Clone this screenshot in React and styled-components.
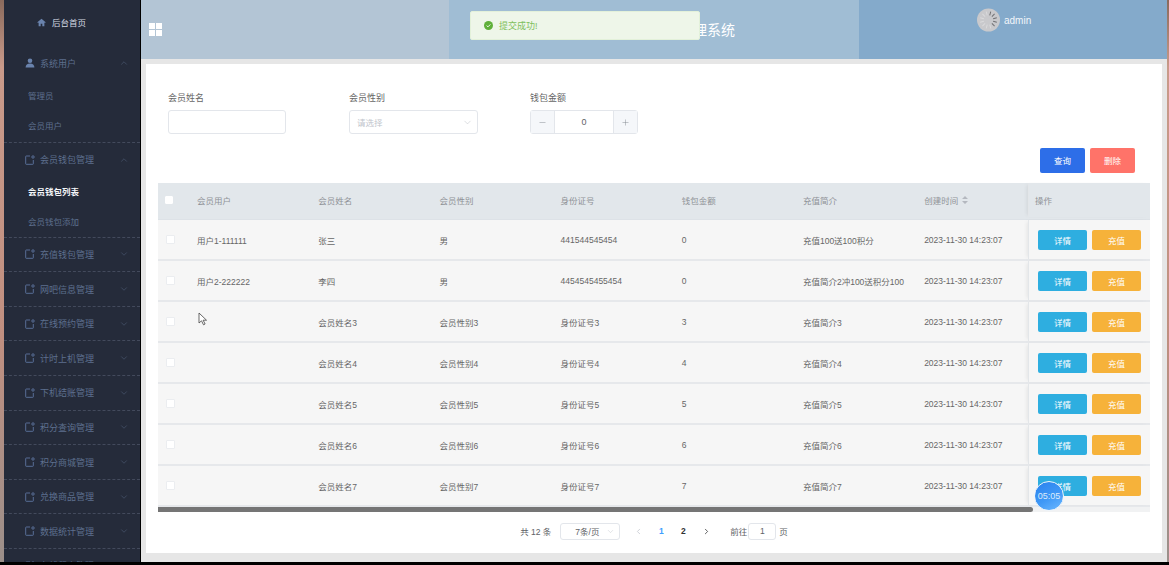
import React from "react";
import styled, { createGlobalStyle } from "styled-components";
import { ChevronUp, ChevronDown, ChevronLeft, ChevronRight, Plus, Minus } from "lucide-react";

const GlobalStyle = createGlobalStyle`
  html, body {
    margin: 0;
    padding: 0;
    width: 1169px;
    height: 565px;
    overflow: hidden;
    background: #000;
    font-family: "Liberation Sans", "Noto Sans CJK SC", sans-serif;
  }
  * { box-sizing: border-box; }
`;

const Screen = styled.div`
  position: relative;
  width: 1169px;
  height: 565px;
  display: flex;
  flex-direction: column;
  overflow: hidden;
  background: #000;
`;

const Desktop = styled.div`
  height: 562px;
  display: flex;
`;

const Edge = styled.div`
  flex: none;
  width: ${(p) => p.$width}px;
  background: linear-gradient(180deg, #8a6a5c 0%, #c99a8a 12%, #c08f80 60%, #9b8f8a 100%);
`;

/* sidebar */
const Sidebar = styled.aside`
  flex: none;
  width: 136px;
  overflow: hidden;
  background: #252b3a;
  color: #5d6f8e;
`;

const HomeRow = styled.div`
  height: 46px;
  display: flex;
  align-items: center;
  gap: 6px;
  padding: 0 0 2px 33px;
  color: #d5dbe5;
  font-size: 8.5px;
`;

const Group = styled.div`
  border-bottom: 1px dashed #434a5c;
`;

const GroupTitle = styled.div`
  height: ${(p) => p.$height || 34.6}px;
  display: flex;
  align-items: center;
  padding-left: 21px;
  font-size: 9px;
`;

const GroupLabel = styled.span`
  flex: 1;
  margin-left: 5px;
`;

const GroupArrow = styled.span`
  display: flex;
  width: 10px;
  margin-right: 11px;
  color: #566683;
`;

const SubItem = styled.div`
  height: ${(p) => p.$height || 30.5}px;
  display: flex;
  align-items: center;
  padding: 0 0 2px 24px;
  font-size: 8.5px;
  color: ${(p) => (p.$active ? "#f4f6f9" : "#5d6f8e")};
  font-weight: ${(p) => (p.$active ? 700 : 400)};
`;

/* right part */
const Content = styled.div`
  flex: 1;
  min-width: 0;
  display: flex;
  flex-direction: column;
  margin-left: 1px;
  background: #e6e6e6;
`;

const TopBar = styled.header`
  flex: none;
  height: 59px;
  display: flex;
`;

const MenuSegment = styled.div`
  flex: none;
  width: 308px;
  display: flex;
  align-items: center;
  padding-left: 8px;
  background: #b3c5d5;
`;

const GridIcon = styled.div`
  display: grid;
  grid-template-columns: 6px 6px;
  grid-auto-rows: 6px;
  gap: 1px;
`;

const GridCell = styled.span`
  background: #fff;
`;

const TitleSegment = styled.div`
  flex: none;
  width: 410px;
  display: flex;
  align-items: center;
  justify-content: center;
  padding: 0 6px 2px 0;
  background: #a0bdd4;
  color: #fff;
  font-size: 14px;
`;

const UserSegment = styled.div`
  flex: 1;
  display: flex;
  align-items: flex-start;
  gap: 4px;
  padding: 8px 0 0 118px;
  background: #84aacb;
`;

const UserName = styled.span`
  margin-top: 7px;
  color: #f2f6fa;
  font-size: 10px;
`;

const Panel = styled.main`
  height: 489px;
  margin: 5px 5px 0;
  padding: 28px 12px 0;
  background: #fff;
`;

const FilterForm = styled.div`
  display: flex;
  padding-left: 10px;
`;

const Field = styled.div`
  width: ${(p) => p.$width}px;
  flex: none;
  display: flex;
  flex-direction: column;
  gap: 6px;
`;

const FieldLabel = styled.label`
  height: 12px;
  line-height: 12px;
  font-size: 9px;
  color: #666;
`;

const Box = styled.div`
  height: 24px;
  display: flex;
  align-items: center;
  border: 1px solid #e3e6eb;
  border-radius: 3px;
  background: #fff;
  width: ${(p) => p.$width}px;
`;

const Placeholder = styled.span`
  flex: 1;
  padding: 0 0 1px 7px;
  font-size: 8.5px;
  color: #c0c4cc;
`;

const SelectArrow = styled.span`
  display: flex;
  margin-right: 4px;
  color: #b4b8c0;
`;

const StepButton = styled.span`
  flex: none;
  width: 24px;
  height: 100%;
  display: flex;
  align-items: center;
  justify-content: center;
  background: #f5f7fa;
  color: #7d828a;
  border-${(p) => p.$side}: 1px solid #e3e6eb;
`;

const StepValue = styled.span`
  flex: 1;
  text-align: center;
  font-size: 9px;
  color: #606266;
`;

const ActionRow = styled.div`
  display: flex;
  justify-content: flex-end;
  gap: 5px;
  margin-top: 14px;
  padding-right: 15px;
`;

const ActionButton = styled.button`
  width: 45px;
  height: 25px;
  padding: 0 0 1px;
  border: 0;
  border-radius: 2px;
  background: ${(p) => p.$color};
  color: #fff;
  font: inherit;
  font-size: 8.5px;
`;

/* table */
const Table = styled.div`
  margin-top: 10px;
`;

const Row = styled.div`
  display: grid;
  grid-template-columns: 29px repeat(6, 121.2px) 113.8px 122px;
  align-items: center;
  height: ${(p) => (p.$head ? 37 : 41)}px;
  padding-bottom: ${(p) => (p.$head ? 2 : 0)}px;
  background: ${(p) => (p.$head ? "#e2e7eb" : "#f6f6f6")};
  border-bottom: ${(p) => (p.$head ? "1px solid #dde2e7" : "2px solid #e6e8eb")};
`;

const Cell = styled.div`
  padding-left: 10px;
  font-size: 8.5px;
  color: ${(p) => (p.$head ? "#8f9297" : "#666")};
  white-space: nowrap;
  display: flex;
  align-items: center;
  gap: 4px;
`;

const CheckCell = styled.div`
  padding-left: ${(p) => (p.$head ? 7 : 8)}px;
  display: flex;
`;

const Check = styled.span`
  width: ${(p) => (p.$head ? 8 : 9)}px;
  height: ${(p) => (p.$head ? 8 : 9)}px;
  background: #fff;
  border: 1px solid ${(p) => (p.$head ? "#fff" : "#ebedf0")};
  border-radius: 1px;
`;

const FixedCell = styled.div`
  height: 100%;
  display: flex;
  align-items: center;
  gap: 5px;
  padding-left: ${(p) => (p.$head ? 6 : 9)}px;
  border-left: 1px solid #e3e6e9;
  box-shadow: -3px 0 4px -2px rgba(0, 0, 0, 0.08);
  font-size: 8.5px;
  color: #8f9297;
`;

const RowButton = styled.button`
  width: 49px;
  height: 20px;
  padding: 0;
  border: 0;
  border-radius: 2px;
  background: ${(p) => p.$color};
  color: #fff;
  font: inherit;
  font-size: 8.5px;
`;

const ScrollTrack = styled.div`
  height: 5px;
  background: #f1f2f3;
`;

const ScrollThumb = styled.div`
  width: 875px;
  height: 100%;
  border-radius: 0 3px 3px 0;
  background: #757575;
`;

const Pager = styled.div`
  display: flex;
  align-items: center;
  justify-content: center;
  height: 18px;
  margin-top: 10px;
  font-size: 8.5px;
  color: #606266;
`;

const PagerSelect = styled.div`
  width: 60px;
  height: 17px;
  margin-left: 9px;
  display: flex;
  align-items: center;
  border: 1px solid #e3e6eb;
  border-radius: 3px;
`;

const PagerSelectText = styled.span`
  flex: 1;
  padding-left: 14px;
`;

const PagerArrow = styled.span`
  display: flex;
  justify-content: center;
  width: 12px;
  margin: ${(p) => p.$margin};
  color: ${(p) => (p.$muted ? "#c0c4cc" : "#303133")};
`;

const PageNumber = styled.span`
  width: 22px;
  text-align: center;
  font-weight: 700;
  color: ${(p) => (p.$active ? "#409eff" : "#303133")};
`;

const PagerInput = styled.span`
  width: 28px;
  height: 17px;
  margin: 0 3px 0 1px;
  display: flex;
  align-items: center;
  justify-content: center;
  border: 1px solid #e3e6eb;
  border-radius: 3px;
`;

/* overlays */
const Toast = styled.div`
  position: absolute;
  left: 470px;
  top: 11px;
  width: 230px;
  height: 29px;
  display: flex;
  align-items: center;
  gap: 6px;
  padding-left: 13px;
  background: #eef6e9;
  border: 1px solid #e3f1da;
  border-radius: 2px;
  color: #7ec05c;
  font-size: 9px;
`;

const Timer = styled.div`
  position: absolute;
  left: 1034px;
  top: 481px;
  width: 30px;
  height: 30px;
  display: flex;
  align-items: center;
  justify-content: center;
  border: 1.5px solid #eef5fb;
  border-radius: 50%;
  background: linear-gradient(150deg, #2a82ee 0%, #3f98f6 55%, #6db9ff 100%);
  color: #dcebfb;
  font-size: 9px;
`;

const Cursor = styled.svg`
  position: absolute;
  left: 198px;
  top: 312px;
`;

const NoteIcon = () => (
  <svg width="10" height="10" viewBox="0 0 10 10" fill="none" stroke="#5d75a0" strokeWidth="0.9">
    <path d="M5 1H1.2a.5.5 0 0 0-.5.5v7.3a.5.5 0 0 0 .5.5h6.6a.5.5 0 0 0 .5-.5V5" />
    <circle cx="8" cy="2" r="1.2" />
  </svg>
);

const UserIcon = () => (
  <svg width="10" height="10" viewBox="0 0 10 10" fill="#6a83ad">
    <circle cx="5" cy="2.8" r="2.3" />
    <path d="M0.6 9.6c0-2.6 1.8-4 4.4-4s4.4 1.4 4.4 4z" />
  </svg>
);

const HomeIcon = () => (
  <svg width="9" height="9" viewBox="0 0 10 10" fill="#6a83ad">
    <path d="M5 .8 .4 4.8l.6.7.8-.6v4.3h2.3V6.4h1.8v2.8h2.300V4.900l.8.6.6-.7z" />
  </svg>
);

const SuccessIcon = () => (
  <svg width="9" height="9" viewBox="0 0 10 10">
    <circle cx="5" cy="5" r="5" fill="#5fb03a" />
    <path d="M2.900 5.100 4.400 6.500 7.100 3.800" fill="none" stroke="#fff" strokeWidth="1" />
  </svg>
);

const SortIcon = () => (
  <svg width="6" height="8" viewBox="0 0 6 8" fill="#b4b8bf">
    <path d="M3 0 6 3H0zM3 8 0 5h6z" />
  </svg>
);

const Spinner = () => (
  <svg width="23" height="24" viewBox="0 0 24 24">
    <circle cx="12" cy="12" r="12" fill="#c9c9cc" />
    {Array.from({ length: 12 }).map((_, i) => (
      <line
        key={i}
        x1="12"
        y1="3"
        x2="12"
        y2="7"
        stroke={i < 5 ? "#6f6f72" : "#dadadc"}
        strokeWidth="1"
        transform={`rotate(${i * 30 + 15} 12 12)`}
      />
    ))}
  </svg>
);

const foldedMenus = [
  "充值钱包管理",
  "网吧信息管理",
  "在线预约管理",
  "计时上机管理",
  "下机结账管理",
  "积分查询管理",
  "积分商城管理",
  "兑换商品管理",
  "数据统计管理",
  "在线留言管理",
];

const columns = ["会员用户", "会员姓名", "会员性别", "身份证号", "钱包金额", "充值简介"];

const date = "2023-11-30 14:23:07";

const rows = [
  ["用户1-111111", "张三", "男", "441544545454", "0", "充值100送100积分"],
  ["用户2-222222", "李四", "男", "4454545455454", "0", "充值简介2冲100送积分100"],
  ...[3, 4, 5, 6, 7].map((n) => ["", `会员姓名${n}`, `会员性别${n}`, `身份证号${n}`, `${n}`, `充值简介${n}`]),
];

export default function App() {
  return (
    <Screen>
      <GlobalStyle />
      <Desktop>
        <Edge $width={4} />
        <Sidebar>
          <HomeRow>
            <HomeIcon />
            后台首页
          </HomeRow>
          <Group>
            <GroupTitle>
              <UserIcon />
              <GroupLabel>系统用户</GroupLabel>
              <GroupArrow><ChevronUp size={10} strokeWidth={1.2} /></GroupArrow>
            </GroupTitle>
            <SubItem>管理员</SubItem>
            <SubItem>会员用户</SubItem>
          </Group>
          <Group>
            <GroupTitle>
              <NoteIcon />
              <GroupLabel>会员钱包管理</GroupLabel>
              <GroupArrow><ChevronUp size={10} strokeWidth={1.2} /></GroupArrow>
            </GroupTitle>
            <SubItem $active>会员钱包列表</SubItem>
            <SubItem $height={29}>会员钱包添加</SubItem>
          </Group>
          {foldedMenus.map((name) => (
            <Group key={name}>
              <GroupTitle $height={33.6}>
                <NoteIcon />
                <GroupLabel>{name}</GroupLabel>
                <GroupArrow><ChevronDown size={10} strokeWidth={1.2} /></GroupArrow>
              </GroupTitle>
            </Group>
          ))}
        </Sidebar>
        <Content>
          <TopBar>
            <MenuSegment>
              <GridIcon>
                <GridCell />
                <GridCell />
                <GridCell />
                <GridCell />
              </GridIcon>
            </MenuSegment>
            <TitleSegment>网吧会员钱包充值管理系统</TitleSegment>
            <UserSegment>
              <Spinner />
              <UserName>admin</UserName>
            </UserSegment>
          </TopBar>
          <Panel>
            <FilterForm>
              <Field $width={181}>
                <FieldLabel>会员姓名</FieldLabel>
                <Box $width={118} />
              </Field>
              <Field $width={181}>
                <FieldLabel>会员性别</FieldLabel>
                <Box $width={129}>
                  <Placeholder>请选择</Placeholder>
                  <SelectArrow><ChevronDown size={11} strokeWidth={1} /></SelectArrow>
                </Box>
              </Field>
              <Field $width={108}>
                <FieldLabel>钱包金额</FieldLabel>
                <Box $width={108}>
                  <StepButton $side="right"><Minus size={9} strokeWidth={1.2} /></StepButton>
                  <StepValue>0</StepValue>
                  <StepButton $side="left"><Plus size={9} strokeWidth={1.2} /></StepButton>
                </Box>
              </Field>
            </FilterForm>
            <ActionRow>
              <ActionButton $color="#2d6ee8">查询</ActionButton>
              <ActionButton $color="#ff7369">删除</ActionButton>
            </ActionRow>
            <Table>
              <Row $head>
                <CheckCell $head><Check $head /></CheckCell>
                {columns.map((c) => (
                  <Cell $head key={c}>{c}</Cell>
                ))}
                <Cell $head>创建时间 <SortIcon /></Cell>
                <FixedCell $head>操作</FixedCell>
              </Row>
              {rows.map((r, i) => (
                <Row key={i}>
                  <CheckCell><Check /></CheckCell>
                  {r.map((v, j) => (
                    <Cell key={j}>{v}</Cell>
                  ))}
                  <Cell>{date}</Cell>
                  <FixedCell>
                    <RowButton $color="#2eaee0">详情</RowButton>
                    <RowButton $color="#f6b23a">充值</RowButton>
                  </FixedCell>
                </Row>
              ))}
              <ScrollTrack>
                <ScrollThumb />
              </ScrollTrack>
            </Table>
            <Pager>
              共 12 条
              <PagerSelect>
                <PagerSelectText>7条/页</PagerSelectText>
                <SelectArrow><ChevronDown size={9} strokeWidth={1} /></SelectArrow>
              </PagerSelect>
              <PagerArrow $muted $margin="0 6px 0 12px"><ChevronLeft size={9} /></PagerArrow>
              <PageNumber $active>1</PageNumber>
              <PageNumber>2</PageNumber>
              <PagerArrow $margin="0 18px 0 6px"><ChevronRight size={9} /></PagerArrow>
              前往
              <PagerInput>1</PagerInput>
              页
            </Pager>
          </Panel>
        </Content>
        <Edge $width={2} />
      </Desktop>
      <Toast>
        <SuccessIcon />
        提交成功!
      </Toast>
      <Timer>05:05</Timer>
      <Cursor width="11" height="14" viewBox="0 0 11 14">
        <path d="M1 1v10l2.500-2.200 2 4 1.600-.8-2-3.800H8.500z" fill="#fff" stroke="#444" strokeWidth="0.8" />
      </Cursor>
    </Screen>
  );
}
